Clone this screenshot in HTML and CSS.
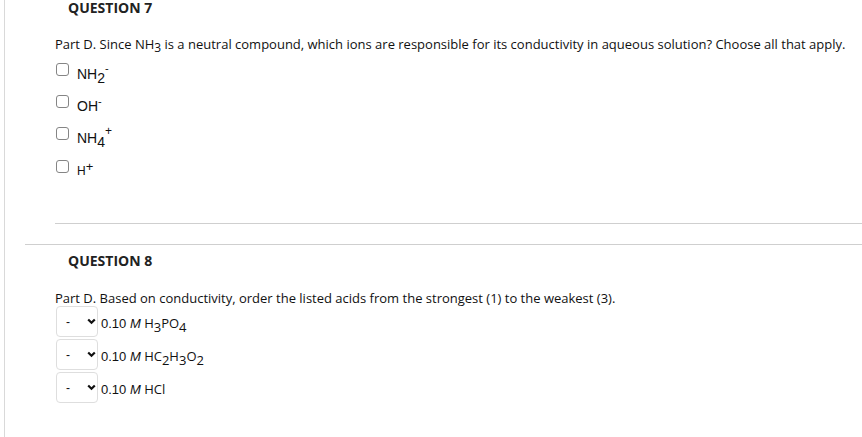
FILE: index.html
```html
<!DOCTYPE html>
<html>
<head>
<meta charset="utf-8">
<link rel="stylesheet" href="styles.css">
</head>
<body>
<div class="page">
  <section class="question q7">
    <h2 class="qtitle">QUESTION 7</h2>
    <div class="qbody">
      <p class="prompt">Part D. Since NH<sub class="psub">3</sub> is a neutral compound, which ions are responsible for its conductivity in aqueous solution? Choose all that apply.</p>
      <ul class="choices">
        <li class="choice"><span class="box"></span><span class="ion">NH<sub>2</sub><sup class="minus">-</sup></span></li>
        <li class="choice"><span class="box"></span><span class="ion">OH<sup class="minus small">-</sup></span></li>
        <li class="choice"><span class="box"></span><span class="ion">NH<sub>4</sub><sup class="plus">+</sup></span></li>
        <li class="choice"><span class="box"></span><span class="ion small-ion">H<sup class="plus h">+</sup></span></li>
      </ul>
      <hr class="inner">
    </div>
  </section>
  <hr class="outer">
  <section class="question q8">
    <h2 class="qtitle">QUESTION 8</h2>
    <div class="qbody">
      <p class="prompt">Part D. Based on conductivity, order the listed acids from the strongest (1) to the weakest (3).</p>
      <ul class="orders">
        <li class="order"><span class="select"><span class="dash">-</span><svg class="chev" width="9" height="7" viewBox="0 0 9 7"><path d="M1.2 1.5 L4.5 4.8 L7.8 1.5" fill="none" stroke="#111" stroke-width="2.2"/></svg></span><span class="acid"><span class="num">0.10 <i>M</i></span> H<sub>3</sub>PO<sub>4</sub></span></li>
        <li class="order"><span class="select"><span class="dash">-</span><svg class="chev" width="9" height="7" viewBox="0 0 9 7"><path d="M1.2 1.5 L4.5 4.8 L7.8 1.5" fill="none" stroke="#111" stroke-width="2.2"/></svg></span><span class="acid"><span class="num">0.10 <i>M</i></span> HC<sub>2</sub>H<sub>3</sub>O<sub>2</sub></span></li>
        <li class="order"><span class="select"><span class="dash">-</span><svg class="chev" width="9" height="7" viewBox="0 0 9 7"><path d="M1.2 1.5 L4.5 4.8 L7.8 1.5" fill="none" stroke="#111" stroke-width="2.2"/></svg></span><span class="acid"><span class="num">0.10 <i>M</i></span> HCl</span></li>
      </ul>
    </div>
  </section>
</div>
</body>
</html>
```
FILE: styles.css
```css
html, body {
  margin: 0;
  padding: 0;
  background: #fff;
}
body {
  font-family: "Open Sans", "Liberation Sans", sans-serif;
  color: #111;
}
.page {
  margin-left: 4px;
  border-left: 1px solid #d9d9d9;
  height: 437px;
  padding-left: 20px;
  box-sizing: border-box;
  overflow: hidden;
}
.question {
  padding-left: 30px;
}
.qtitle {
  margin: 0;
  padding-left: 13px;
  font-size: 14px;
  font-weight: 700;
  line-height: 18px;
  color: #222;
}
.q7 .qtitle {
  margin-top: -1px;
}
.q8 .qtitle {
  margin-top: 7px;
}
.prompt {
  margin: 0;
  font-size: 13px;
  line-height: 18px;
}
.q7 .prompt {
  margin-top: 18px;
}
.q8 .prompt {
  margin-top: 19px;
}
.psub {
  font-size: 12px;
  vertical-align: -3px;
  line-height: 0;
}
.choices {
  list-style: none;
  margin: 8px 0 0;
  padding: 0;
}
.choice {
  display: flex;
  align-items: flex-start;
  height: 32px;
}
.choice:nth-child(4) {
  margin-top: 1px;
}
.box {
  width: 11px;
  height: 11px;
  border: 1px solid #858585;
  border-radius: 3px;
  margin: 2px 8px 0 1px;
  flex: none;
}
.ion {
  font-family: "Liberation Sans", Arial, sans-serif;
  font-size: 14px;
  line-height: 15px;
  padding-top: 6px;
}
.ion sub {
  font-size: 14px;
  vertical-align: -4px;
  line-height: 0;
}
.ion sup {
  line-height: 0;
}
.minus {
  font-size: 11px;
  vertical-align: 7px;
}
.minus.small {
  vertical-align: 6px;
}
.plus {
  font-size: 12px;
  vertical-align: 8px;
}
.small-ion {
  font-size: 12px;
}
.plus.h {
  font-size: 13px;
  vertical-align: 4px;
}
.inner {
  margin: 33px 0 0;
  border: 0;
  border-top: 1px solid #cfcfcf;
  height: 0;
}
.outer {
  margin: 20px 0 0;
  border: 0;
  border-top: 1px solid #cfcfcf;
  height: 0;
}
.orders {
  list-style: none;
  margin: -1px 0 0;
  padding: 0;
}
.order {
  display: flex;
  align-items: center;
  margin-bottom: 2px;
}
.select {
  display: flex;
  align-items: center;
  width: 42px;
  height: 31px;
  box-sizing: border-box;
  border: 1px solid #dedede;
  border-radius: 4px;
  padding-left: 9px;
  flex: none;
  margin-left: 1px;
}
.dash {
  font-family: "Liberation Sans", Arial, sans-serif;
  font-size: 12px;
  width: 21px;
}
.chev {
  display: block;
}
.acid {
  margin-left: 3px;
  padding-top: 4px;
  font-size: 13px;
  line-height: 16px;
}
.num {
  font-family: "Liberation Sans", Arial, sans-serif;
}
.acid sub {
  font-size: 13px;
  vertical-align: -4px;
  line-height: 0;
}
```
